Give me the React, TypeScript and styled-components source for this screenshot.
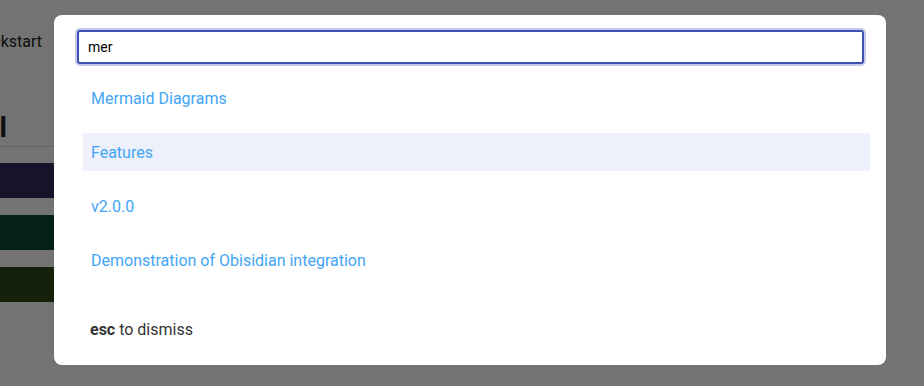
import { useState } from 'react';
import styled, { createGlobalStyle } from 'styled-components';

const results = [
  'Mermaid Diagrams',
  'Features',
  'v2.0.0',
  'Demonstration of Obisidian integration',
];

const App = () => {
  const [query, setQuery] = useState('mer');
  const active = 1;

  return (
    <>
      <GlobalStyle />
      <Page>
        <Clip $width={42}>
          <NavLink>Quickstart</NavLink>
        </Clip>
        <HeadingRow>
          <Clip $width={7}>
            <Heading>Tutorial</Heading>
          </Clip>
        </HeadingRow>
        <Bars>
          <Bar $color="#332a5d" />
          <Bar $color="#0b4b35" />
          <Bar $color="#314b1b" />
        </Bars>
        <Clip $width={4}>
          <Tail>on</Tail>
        </Clip>
      </Page>

      <Overlay>
        <Modal>
          <SearchInput
            type="text"
            autoFocus
            value={query}
            onChange={(e) => setQuery(e.target.value)}
          />
          <ResultList>
            {results.map((r, i) => (
              <ResultRow key={r} $active={i === active}>
                {r}
              </ResultRow>
            ))}
          </ResultList>
          <Footer>
            <b>esc</b> to dismiss
          </Footer>
        </Modal>
      </Overlay>
    </>
  );
};

export default App;

const GlobalStyle = createGlobalStyle`
  html, body {
    margin: 0;
    padding: 0;
    background: #ffffff;
    font-family: Roboto, "Liberation Sans", sans-serif;
    overflow: hidden;
  }
`;

const Page = styled.div`
  width: 600px;
  height: 386px;
  overflow: hidden;
  padding-top: 32px;
  box-sizing: border-box;
`;

const Clip = styled.div<{ $width: number }>`
  width: ${(p) => p.$width}px;
  overflow: hidden;
  display: flex;
  justify-content: flex-end;
  white-space: nowrap;
`;

const NavLink = styled.span`
  font-size: 16px;
  line-height: 20px;
  color: #222;
`;

const HeadingRow = styled.div`
  margin-top: 60px;
  padding-bottom: 2px;
  border-bottom: 1px solid #dcdcdc;
`;

const Heading = styled.span`
  font-size: 28px;
  line-height: 32px;
  font-weight: 700;
  color: #222;
`;

const Bars = styled.div`
  display: flex;
  flex-direction: column;
  gap: 17px;
  margin-top: 16px;
`;

const Bar = styled.div<{ $color: string }>`
  height: 35px;
  background: ${(p) => p.$color};
`;

const Tail = styled.span`
  display: block;
  margin-top: 78px;
  font-size: 16px;
  font-weight: 700;
  color: #222;
`;

const Overlay = styled.div`
  position: fixed;
  inset: 0;
  background: rgba(0, 0, 0, 0.55);
  padding: 15px 0 0 54px;
`;

const Modal = styled.div`
  width: 832px;
  box-sizing: border-box;
  background: #ffffff;
  border-radius: 8px;
  padding: 15px 16px 26px 23px;
  display: flex;
  flex-direction: column;
`;

const SearchInput = styled.input`
  box-sizing: border-box;
  width: 787px;
  height: 34px;
  border: 2px solid #3f51b5;
  border-radius: 3px;
  box-shadow: 0 0 0 2px #c5cae9;
  outline: none;
  padding: 0 9px;
  font-family: Roboto, "Liberation Sans", sans-serif;
  font-size: 14px;
  color: #000;
`;

const ResultList = styled.div`
  display: flex;
  flex-direction: column;
  gap: 16px;
  margin: 15px 0 0 6px;
`;

const ResultRow = styled.div<{ $active?: boolean }>`
  height: 38px;
  display: flex;
  align-items: center;
  padding-left: 8px;
  font-size: 16px;
  color: #42a5f5;
  background: ${(p) => (p.$active ? '#eef0fc' : 'transparent')};
  cursor: pointer;
`;

const Footer = styled.div`
  margin-top: 41px;
  padding-left: 13px;
  font-size: 16px;
  line-height: 19px;
  color: #333;

  b {
    font-weight: 700;
  }
`;
